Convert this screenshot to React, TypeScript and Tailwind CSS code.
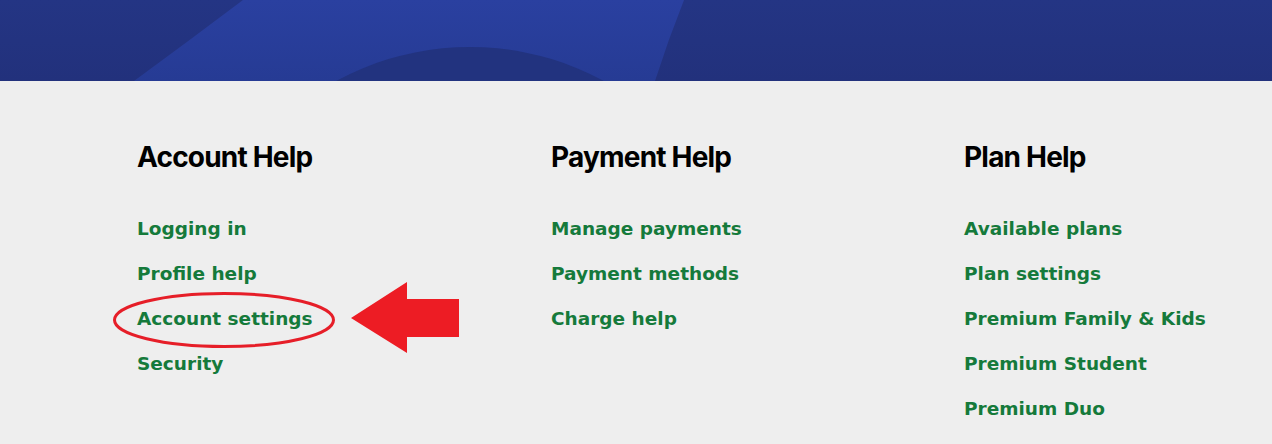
const columns = [
  {
    title: 'Account Help',
    links: ['Logging in', 'Profile help', 'Account settings', 'Security'],
  },
  {
    title: 'Payment Help',
    links: ['Manage payments', 'Payment methods', 'Charge help'],
  },
  {
    title: 'Plan Help',
    links: ['Available plans', 'Plan settings', 'Premium Family & Kids', 'Premium Student', 'Premium Duo'],
  },
];

function HeroBanner() {
  return (
    <div className="relative h-[81px] overflow-hidden bg-[#23337f]">
      <svg className="absolute inset-0" width="1272" height="81" viewBox="0 0 1272 81">
        <defs>
          <linearGradient id="band" x1="0" y1="0" x2="0" y2="1">
            <stop offset="0" stopColor="#2a40a0" />
            <stop offset="1" stopColor="#263b94" />
          </linearGradient>
          <linearGradient id="side" x1="0" y1="0" x2="0" y2="1">
            <stop offset="0" stopColor="#243584" />
            <stop offset="1" stopColor="#22317c" />
          </linearGradient>
        </defs>
        <rect x="0" y="0" width="1272" height="81" fill="url(#side)" />
        <path d="M243 0 L684 0 Q668 40 655 81 L134 81 Q190 40 243 0 Z" fill="url(#band)" />
        <circle cx="470" cy="328" r="281" fill="#22337f" />
      </svg>
    </div>
  );
}

function HelpColumn({ title, links }: { title: string; links: string[] }) {
  return (
    <div className="flex flex-col">
      <h2 className="font-['Inter',sans-serif] text-[28px] font-bold leading-[32px] tracking-[-0.8px] text-black">
        {title}
      </h2>
      <ul className="mt-[44px] flex flex-col gap-[21px]">
        {links.map((link) => (
          <li key={link} className="font-['DejaVu_Sans',sans-serif] text-[18.5px] font-bold leading-[24px] text-[#157a3b]">
            <a href="#">{link}</a>
          </li>
        ))}
      </ul>
    </div>
  );
}

export default function App() {
  return (
    <div className="relative h-[444px] w-[1272px] overflow-hidden bg-[#eeeeee]">
      <HeroBanner />
      <div className="grid grid-cols-[414px_413px_1fr] pl-[137px] pt-[60px]">
        {columns.map((col) => (
          <HelpColumn key={col.title} title={col.title} links={col.links} />
        ))}
      </div>

      {/* red callout marking "Account settings" */}
      <svg className="absolute left-0 top-0" width="1272" height="444" viewBox="0 0 1272 444">
        <ellipse cx="224" cy="320" rx="109.5" ry="26.5" fill="none" stroke="#e61e28" strokeWidth="3" />
        <polygon points="351,318 407,282 407,299 459,299 459,337 407,337 407,353" fill="#ed1c24" />
      </svg>
    </div>
  );
}
